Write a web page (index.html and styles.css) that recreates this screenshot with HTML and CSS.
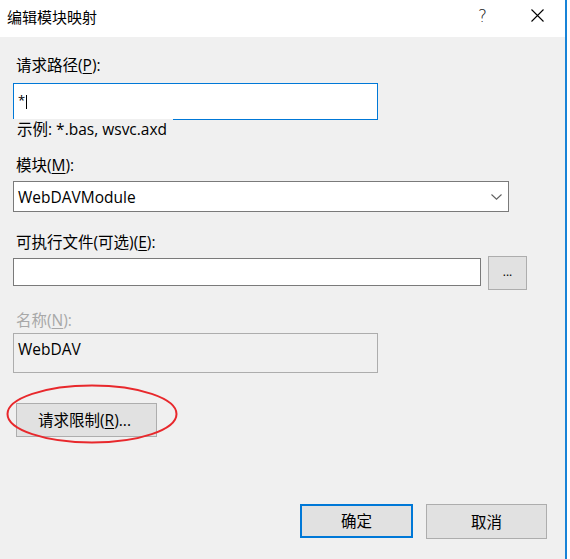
FILE: index.html
```html
<!DOCTYPE html>
<html lang="zh-CN">
<head>
<meta charset="utf-8">
<title>编辑模块映射</title>
<link rel="stylesheet" href="styles.css">
</head>
<body>
<div class="screen">
  <div class="dialog">
    <div class="titlebar">
      <span class="title">编辑模块映射</span>
      <div class="tb-buttons">
        <span class="tb-btn help">?</span>
        <span class="tb-btn close">
          <svg width="13" height="13" viewBox="0 0 13 13"><path d="M0.5 0.5 L12.5 12.5 M12.5 0.5 L0.5 12.5" stroke="#000" stroke-width="1.1" fill="none"/></svg>
        </span>
      </div>
    </div>
    <div class="content">
      <div class="label">请求路径(<u>P</u>):</div>
      <div class="textbox focused path"><span class="val star">*</span><span class="caret"></span></div>
      <div class="hint">示例: *.bas, wsvc.axd</div>

      <div class="label l-module">模块(<u>M</u>):</div>
      <div class="combo">
        <span class="val">WebDAVModule</span>
        <svg class="chevron" width="11" height="6" viewBox="0 0 11 6"><path d="M0.5 0.5 L5.5 5.2 L10.5 0.5" stroke="#606060" stroke-width="1.1" fill="none"/></svg>
      </div>

      <div class="label l-exec">可执行文件(可选)(<u>E</u>):</div>
      <div class="row">
        <div class="textbox exec"></div>
        <div class="btn browse">...</div>
      </div>

      <div class="label l-name disabled">名称(<u>N</u>):</div>
      <div class="textbox readonly"><span class="val">WebDAV</span></div>

      <div class="restrict-wrap">
        <div class="btn restrict">请求限制(<u>R</u>)...</div>
        <svg class="annot" width="172" height="60" viewBox="0 0 172 60"><ellipse cx="86" cy="30" rx="84.5" ry="28.5" stroke="#e8282c" stroke-width="2" fill="none"/></svg>
      </div>

      <div class="footer">
        <div class="btn ok">确定</div>
        <div class="btn cancel">取消</div>
      </div>
    </div>
  </div>
  <div class="edge"></div>
</div>
</body>
</html>
```
FILE: styles.css
```css
html, body {
  margin: 0;
  padding: 0;
  background: #ffffff;
}
body {
  font-family: "Open Sans", "Noto Sans CJK SC", sans-serif;
  font-size: 15.5px;
  color: #000;
}
.screen {
  display: flex;
  width: 570px;
  height: 559px;
  overflow: hidden;
}
.dialog {
  width: 565px;
  height: 559px;
  background: #f0f0f0;
  display: flex;
  flex-direction: column;
}
.edge {
  width: 2px;
  height: 559px;
  background: #1883d7;
}
.titlebar {
  height: 37px;
  background: #ffffff;
  display: flex;
  align-items: center;
  justify-content: space-between;
}
.title {
  padding-left: 7px;
  line-height: 20px;
  margin-top: -3px;
  font-size: 15px;
  font-family: "Noto Sans CJK SC", sans-serif;
}
.tb-buttons {
  display: flex;
  height: 37px;
}
.tb-btn {
  width: 55px;
  height: 37px;
  display: flex;
  align-items: center;
  justify-content: center;
  margin-top: -3px;
}
.help {
  font-family: "DejaVu Sans", sans-serif;
  font-weight: 300;
  font-size: 17px;
  color: #222;
}
.content {
  padding: 18px 18px 0 13px;
  display: flex;
  flex-direction: column;
  align-items: flex-start;
}
.label {
  line-height: 20px;
  padding-left: 3px;
}
.label u {
  text-underline-offset: 2px;
  text-decoration-thickness: 1px;
}
.disabled {
  color: #a8a8a8;
}
.textbox {
  box-sizing: border-box;
  background: #ffffff;
  border: 1px solid #7a7a7a;
  display: flex;
  align-items: center;
  padding-left: 4px;
}
.path {
  margin-top: 8px;
  width: 365px;
  height: 37px;
  border-color: #0078d7;
}
.path .star {
  font-size: 13px;
  line-height: 20px;
  margin-top: -4px;
}
.caret {
  width: 1px;
  height: 14px;
  background: #000;
  margin-left: 1px;
  margin-top: 1px;
}
.hint {
  margin-top: -1px;
  line-height: 20px;
  padding: 0 6px 0 4px;
  background: #f0f0f0;
  color: #000;
}
.l-module {
  margin-top: 16px;
}
.combo {
  box-sizing: border-box;
  margin-top: 6px;
  width: 496px;
  height: 31px;
  background: #ffffff;
  border: 1px solid #7a7a7a;
  display: flex;
  align-items: center;
  justify-content: space-between;
  padding: 0 6px 0 4px;
}
.combo .val {
  line-height: 20px;
}
.chevron {
  display: block;
  margin-top: 1px;
}
.l-exec {
  margin-top: 20px;
}
.row {
  margin-top: 4px;
  display: flex;
  align-items: flex-start;
  gap: 7px;
}
.exec {
  width: 468px;
  height: 28px;
  margin-top: 2px;
}
.btn {
  box-sizing: border-box;
  background: #e1e1e1;
  border: 1px solid #adadad;
  display: flex;
  align-items: center;
  justify-content: center;
  line-height: 20px;
}
.browse {
  width: 39px;
  height: 34px;
  font-size: 12px;
  padding-bottom: 2px;
}
.l-name {
  margin-top: 20px;
}
.readonly {
  margin-top: 3px;
  width: 365px;
  height: 40px;
  background: #f0f0f0;
  border-color: #adadad;
  align-items: flex-start;
  padding-top: 5px;
}
.readonly .val {
  line-height: 20px;
}
.restrict-wrap {
  position: relative;
  margin-top: 30px;
  margin-left: 3px;
}
.restrict {
  width: 141px;
  height: 34px;
  padding-right: 4px;
}
.restrict u {
  text-underline-offset: 2px;
}
.annot {
  position: absolute;
  left: -10px;
  top: -19px;
}
.footer {
  margin-top: 67px;
  align-self: stretch;
  display: flex;
  justify-content: flex-end;
  gap: 13px;
}
.ok {
  width: 113px;
  height: 34px;
  border: 2px solid #0078d7;
}
.cancel {
  width: 121px;
  height: 35px;
}
```
